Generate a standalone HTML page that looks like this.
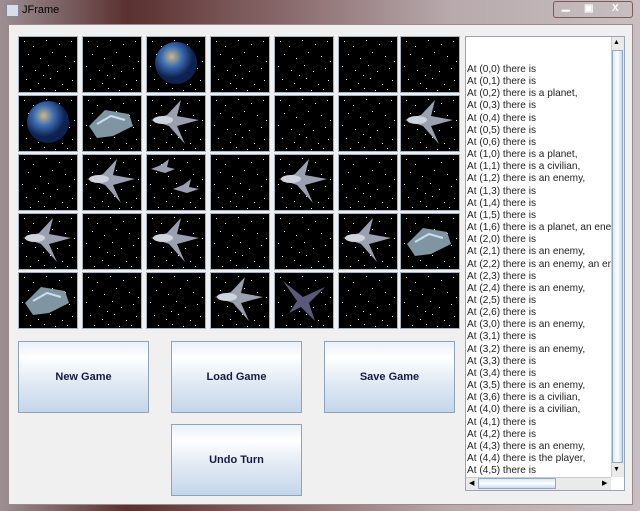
<!DOCTYPE html>
<html><head><style>
body{margin:0;width:640px;height:511px;overflow:hidden;background:#6b4a4a;font-family:"Liberation Sans",sans-serif;position:relative}
.frame{position:absolute;left:0;top:0;width:640px;height:511px;background:linear-gradient(90deg,#9c8f92,#5a3030 20%,#8a6a6c 45%,#b7a9ac 70%,#c9bfc2)}
.content{position:absolute;left:8px;top:24px;width:623px;height:479px;background:#f0f0f0;border:1px solid #9a8c8e}
.title{position:absolute;left:22px;top:4px;font-size:11px;color:#000}
.tile{position:absolute;width:58px;height:55px;border:1px solid #a5b4c2}
.btn{position:absolute;width:129px;height:70px;border:1px solid #8fa3b8;background:linear-gradient(#e9f0f7,#fff 22%,#e3ebf4 55%,#c3d6ea);font-size:11px;font-weight:bold;color:#1a1a40;display:flex;align-items:center;justify-content:center}
.ta{position:absolute;left:465px;top:36px;width:158px;height:453px;border:1px solid #98a6b4;background:#fff;overflow:hidden}
.txt{position:absolute;left:1px;top:27px;font-size:10.1px;line-height:12.15px;color:#222;white-space:pre}
.vs{position:absolute;right:0;top:0;width:12px;height:440px;background:#eaeaea;border-left:1px solid #ccc}
.hs{position:absolute;left:0;bottom:0;width:145px;height:12px;background:#eaeaea;border-top:1px solid #ccc}
</style></head><body>
<div class="frame"></div>
<div class="title">JFrame</div>
<div style="position:absolute;left:6px;top:4px;width:11px;height:11px;background:#d8dde8;border:1px solid #889"></div>
<div style="position:absolute;left:553px;top:1px;width:78px;height:15px;border:1px solid #7a5a5c;border-radius:3px;color:#fff;font-size:10px;font-weight:bold">
<span style="position:absolute;left:8px;top:-1px">▁</span><span style="position:absolute;left:30px;top:1px">▣</span><span style="position:absolute;left:58px;top:1px">X</span></div>
<div class="content"></div>
<svg width="0" height="0" style="position:absolute"><defs>
<pattern id="st" width="58" height="55" patternUnits="userSpaceOnUse">
<rect width="58" height="55" fill="#000"/>
<g fill="#fff">
<rect x="5" y="4" width="1" height="1"/><rect x="14" y="9" width="1" height="1"/><rect x="27" y="3" width="1" height="1"/><rect x="40" y="7" width="1" height="1"/><rect x="52" y="4" width="1" height="1"/>
<rect x="9" y="17" width="1" height="1"/><rect x="21" y="21" width="1" height="1"/><rect x="33" y="15" width="1" height="1"/><rect x="46" y="19" width="1" height="1"/><rect x="55" y="24" width="1" height="1"/>
<rect x="3" y="29" width="1" height="1"/><rect x="16" y="33" width="1" height="1"/><rect x="29" y="28" width="1" height="1"/><rect x="38" y="34" width="1" height="1"/><rect x="50" y="31" width="1" height="1"/>
<rect x="7" y="42" width="1" height="1"/><rect x="19" y="46" width="1" height="1"/><rect x="31" y="41" width="1" height="1"/><rect x="43" y="47" width="1" height="1"/><rect x="53" y="43" width="1" height="1"/>
<rect x="11" y="52" width="1" height="1"/><rect x="25" y="51" width="1" height="1"/><rect x="36" y="53" width="1" height="1"/><rect x="48" y="52" width="1" height="1"/><rect x="24" y="38" width="1" height="1"/>
</g></pattern>
<radialGradient id="pl" cx="40%" cy="35%"><stop offset="0" stop-color="#c9b98a"/><stop offset=".5" stop-color="#3a6ab0"/><stop offset="1" stop-color="#0d2250"/></radialGradient>
</defs></svg>
<div id="g"></div>
<script>
var xs=[18,82,146,210,274,338,400],ys=[36,95,154,213,272];
var sp={"0,2":"p","1,0":"p","1,1":"c","1,2":"e","1,6":"e","2,1":"e","2,2":"e2","2,4":"e","3,0":"e","3,2":"e","3,5":"e","3,6":"c","4,0":"c","4,3":"e","4,4":"pl"};
var h="";
for(var r=0;r<5;r++)for(var c=0;c<7;c++){
var k=sp[r+","+c],s='<svg width="58" height="55"><rect width="58" height="55" fill="url(#st)"/>';
if(k=="p")s+='<circle cx="29" cy="26" r="21" fill="url(#pl)"/>';
if(k=="e")s+='<path d="M4 24 L20 19 L34 4 L30 20 L52 24 L30 30 L38 48 L22 30 Z" fill="#9aa0b0"/><ellipse cx="16" cy="24" rx="10" ry="4" fill="#cfd3dc"/>';
if(k=="e2")s+='<path d="M4 14 L14 10 L22 4 L20 12 L28 14 L18 18 Z M26 34 L36 30 L44 24 L42 32 L52 34 L40 38 Z" fill="#9aa0b0"/>';
if(k=="c")s+='<path d="M6 30 L22 14 L46 18 L50 30 L30 40 L14 42 Z" fill="#7f95a2"/><path d="M14 28 L28 20 L42 24" stroke="#cde" stroke-width="2" fill="none"/>';
if(k=="pl")s+='<path d="M8 8 L28 24 L50 14 L34 30 L40 48 L26 34 L14 40 L22 28 Z" fill="#5a5a78"/>';
s+='</svg>';
h+='<div class="tile" style="left:'+xs[c]+'px;top:'+ys[r]+'px">'+s+'</div>';}
document.getElementById("g").innerHTML=h;
</script>
<div class="btn" style="left:18px;top:341px">New Game</div>
<div class="btn" style="left:171px;top:341px">Load Game</div>
<div class="btn" style="left:324px;top:341px">Save Game</div>
<div class="btn" style="left:171px;top:424px">Undo Turn</div>
<div class="ta"><div class="txt">At (0,0) there is
At (0,1) there is
At (0,2) there is a planet,
At (0,3) there is
At (0,4) there is
At (0,5) there is
At (0,6) there is
At (1,0) there is a planet,
At (1,1) there is a civilian,
At (1,2) there is an enemy,
At (1,3) there is
At (1,4) there is
At (1,5) there is
At (1,6) there is a planet, an enemy,
At (2,0) there is
At (2,1) there is an enemy,
At (2,2) there is an enemy, an enemy,
At (2,3) there is
At (2,4) there is an enemy,
At (2,5) there is
At (2,6) there is
At (3,0) there is an enemy,
At (3,1) there is
At (3,2) there is an enemy,
At (3,3) there is
At (3,4) there is
At (3,5) there is an enemy,
At (3,6) there is a civilian,
At (4,0) there is a civilian,
At (4,1) there is
At (4,2) there is
At (4,3) there is an enemy,
At (4,4) there is the player,
At (4,5) there is</div>
<div class="vs"><div style="position:absolute;left:1px;top:2px;font-size:7px">▲</div><div style="position:absolute;left:0;top:13px;width:11px;height:413px;border:1px solid #8fa8c8;box-sizing:border-box;background:linear-gradient(90deg,#dbe7f5,#fff,#c8daf0)"></div><div style="position:absolute;left:1px;top:429px;font-size:7px">▼</div></div>
<div class="hs"><div style="position:absolute;left:3px;top:1px;font-size:7px">◀</div><div style="position:absolute;left:12px;top:0;width:78px;height:11px;border:1px solid #8fa8c8;box-sizing:border-box;background:linear-gradient(#dbe7f5,#fff,#c8daf0)"></div><div style="position:absolute;left:136px;top:1px;font-size:7px">▶</div></div>
</div>
</body></html>
